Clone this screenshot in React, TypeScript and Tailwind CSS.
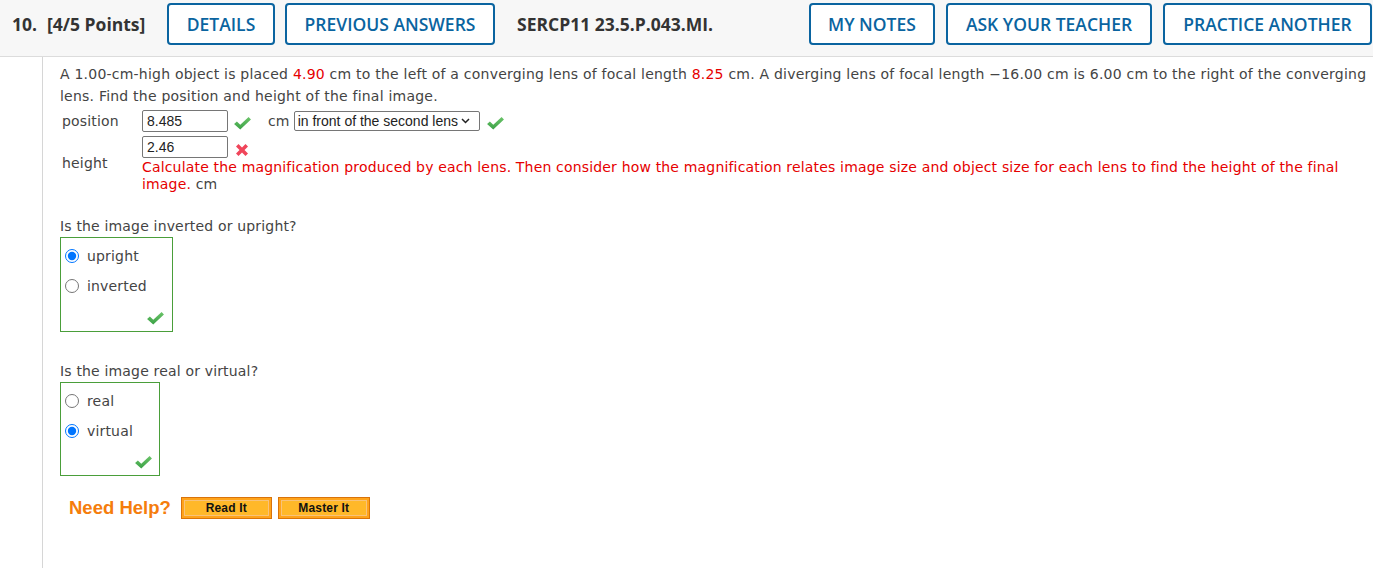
import React from "react";

const Check = ({ className = "" }: { className?: string }) => (
  <svg viewBox="0 0 20 16" width="19" height="15" className={className}>
    <defs>
      <linearGradient id="cg" x1="0" y1="0" x2="0" y2="1">
        <stop offset="0" stopColor="#6cc46a" />
        <stop offset="1" stopColor="#3aa145" />
      </linearGradient>
    </defs>
    <path d="M1 8.5 L4 5.8 L7.6 9.2 L16.5 1 L19 3.6 L7.6 14.5 Z" fill="url(#cg)" />
  </svg>
);

const Cross = () => (
  <svg viewBox="0 0 16 16" width="16" height="16">
    <path d="M2 4.5 L4.5 2 L8 5.5 L11.5 2 L14 4.5 L10.5 8 L14 11.5 L11.5 14 L8 10.5 L4.5 14 L2 11.5 L5.5 8 Z" fill="#f0455a" />
  </svg>
);

const Btn = ({ children, w }: { children: React.ReactNode; w: string }) => (
  <div className={`${w} h-[42px] border-2 border-[#0a64a0] rounded-[4px] flex items-center justify-center text-[#0a64a0] text-[17.5px] font-semibold bg-white`}>
    {children}
  </div>
);

const OrangeBtn = ({ children, w }: { children: React.ReactNode; w: string }) => (
  <div className={`${w} h-[22px] border border-[#d9730a] bg-[#ffa31a] p-[2px]`}>
    <div className="h-full border border-[#f8c27a] bg-[#ffb829] flex items-center justify-center text-[12px] font-bold text-[#111] font-['Liberation_Sans',Arial,sans-serif]">
      {children}
    </div>
  </div>
);

const Radio = ({ label, checked }: { label: string; checked?: boolean }) => (
  <label className="flex items-center h-[30px] gap-[8px]">
    <input type="radio" defaultChecked={checked} className="w-[14px] h-[14px] m-0 ml-[4px]" />
    <span>{label}</span>
  </label>
);

export default function App() {
  return (
    <div className="w-[1373px] h-[568px] bg-white overflow-hidden font-['DejaVu_Sans',Verdana,sans-serif] text-[14px] text-[#444] tracking-[0.17px]">
      <div className="h-[57px] bg-[#f7f7f7] border-b border-[#dcdcdc] flex items-center pb-[8px] font-['Open_Sans',sans-serif] pl-[12px] tracking-normal">
        <span className="font-bold text-[17.5px] text-[#333] w-[35px]">10.</span>
        <span className="font-bold text-[17.5px] text-[#333] w-[120px]">[4/5 Points]</span>
        <div className="flex gap-[10px]">
          <Btn w="w-[108px]">DETAILS</Btn>
          <Btn w="w-[210px]">PREVIOUS ANSWERS</Btn>
        </div>
        <span className="ml-[22px] font-bold text-[17.5px] text-[#333]">SERCP11 23.5.P.043.MI.</span>
        <div className="ml-auto flex gap-[11px] pr-[1px]">
          <Btn w="w-[126px]">MY NOTES</Btn>
          <Btn w="w-[206px]">ASK YOUR TEACHER</Btn>
          <Btn w="w-[209px]">PRACTICE ANOTHER</Btn>
        </div>
      </div>
      <div className="ml-[42px] border-l border-[#d6d6d6] h-[511px] pl-[17px] pr-[6px] pt-[6px]">
        <p className="leading-[22px] tracking-[0.22px]">
          A 1.00-cm-high object is placed <span className="text-[#e60000]">4.90</span> cm to the left of a converging lens of focal length <span className="text-[#e60000]">8.25</span> cm. A diverging lens of focal length −16.00 cm is 6.00 cm to the right of the converging lens. Find the position and height of the final image.
        </p>
        <div className="grid grid-cols-[80px_1fr] mt-[2px] ml-[2px]">
          <div className="flex items-center h-[24px]">position</div>
          <div className="flex items-center h-[24px]">
            <div className="w-[86px] h-[22px] border border-[#767676] rounded-[2px] px-[4px] flex items-center font-['Liberation_Sans',Arial,sans-serif] text-[14px] tracking-normal text-[#222]">8.485</div>
            <Check className="ml-[5px] mt-[4px]" />
            <span className="ml-[16px]">cm</span>
            <div className="ml-[4px] w-[186px] h-[20px] border border-[#767676] rounded-[2px] pl-[3px] pr-[3px] flex items-center gap-[3px] font-['Liberation_Sans',Arial,sans-serif] text-[14px] tracking-normal text-[#222]">
              <span className="whitespace-nowrap">in front of the second lens</span>
              <svg width="9" height="6" viewBox="0 0 9 6" className="shrink-0"><path d="M1 1 L4.5 4.5 L8 1" stroke="#222" strokeWidth="1.5" fill="none" /></svg>
            </div>
            <Check className="ml-[6px] mt-[4px]" />
          </div>
          <div className="flex items-center">height</div>
          <div className="pt-[3px]">
            <div className="flex items-center h-[22px]">
              <div className="w-[86px] h-[22px] border border-[#767676] rounded-[2px] px-[4px] flex items-center font-['Liberation_Sans',Arial,sans-serif] text-[14px] tracking-normal text-[#222]">2.46</div>
              <span className="ml-[6px] mt-[5px]"><Cross /></span>
            </div>
            <p className="leading-[17px] mt-[1px]">
              <span className="text-[#e60000]">Calculate the magnification produced by each lens. Then consider how the magnification relates image size and object size for each lens to find the height of the final image.</span> cm
            </p>
          </div>
        </div>
        <p className="mt-[23px] leading-[20px]">Is the image inverted or upright?</p>
        <div className="mt-[1px] w-[113px] h-[95px] border border-[#4a9e3a] relative pt-[3px]">
          <Radio label="upright" checked />
          <Radio label="inverted" />
          <Check className="absolute right-[7px] bottom-[5px]" />
        </div>
        <p className="mt-[29px] leading-[20px]">Is the image real or virtual?</p>
        <div className="mt-[1px] w-[100px] h-[94px] border border-[#4a9e3a] relative pt-[3px]">
          <Radio label="real" />
          <Radio label="virtual" checked />
          <Check className="absolute right-[6px] bottom-[5px]" />
        </div>
        <div className="flex items-center mt-[18px] ml-[9px]">
          <span className="text-[#f57d0c] font-bold text-[18.5px] tracking-normal font-['Liberation_Sans',Arial,sans-serif]">Need Help?</span>
          <div className="ml-[10px] flex gap-[6px]">
            <OrangeBtn w="w-[91px]">Read It</OrangeBtn>
            <OrangeBtn w="w-[92px]">Master It</OrangeBtn>
          </div>
        </div>
      </div>
    </div>
  );
}
